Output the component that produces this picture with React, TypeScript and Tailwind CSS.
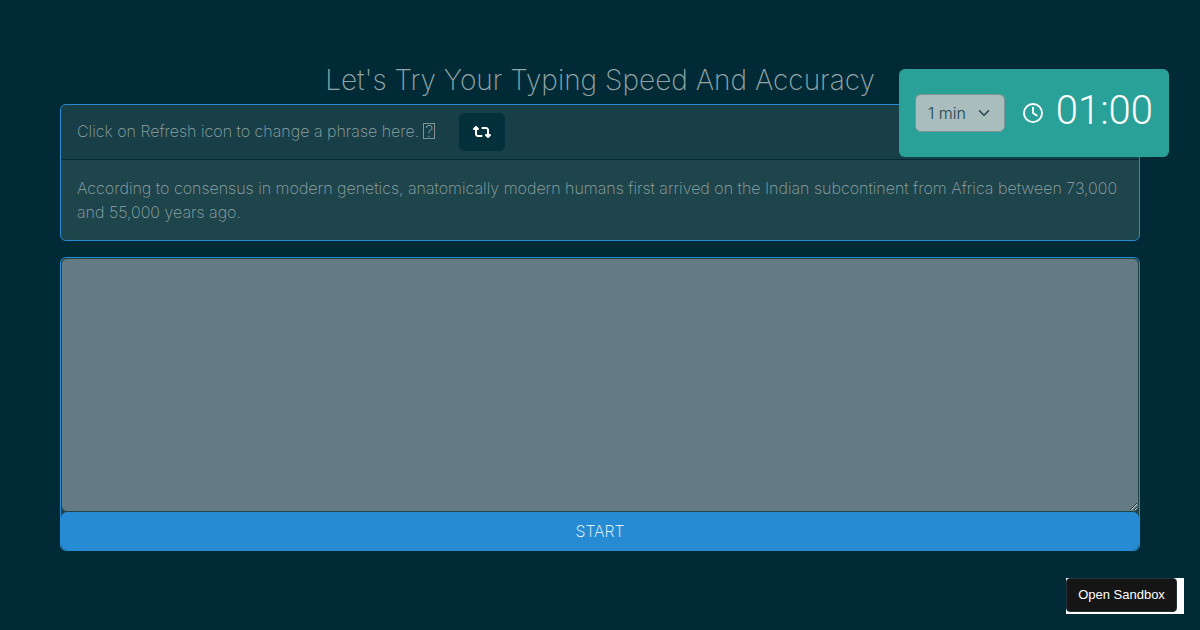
import { useEffect, useState } from 'react';
import { FaRegClock, FaRetweet } from 'react-icons/fa6';

const phrases = [
  'According to consensus in modern genetics, anatomically modern humans first arrived on the Indian subcontinent from Africa between 73,000 and 55,000 years ago.',
  'A journey of a thousand miles begins with a single step, and every careful step along the way teaches the traveller something new.',
];

const formatTime = (seconds: number) => {
  const mins = Math.floor(seconds / 60).toString().padStart(2, '0');
  const secs = (seconds % 60).toString().padStart(2, '0');
  return `${mins}:${secs}`;
};

interface TimerProps {
  minutes: number;
  seconds: number;
  onChange: (minutes: number) => void;
}

function Timer({ minutes, seconds, onChange }: TimerProps) {
  return (
    <div className="fixed top-[69px] right-[31px] z-10 flex h-[88px] w-[270px] items-center rounded-md bg-[#2aa198] px-4 text-white">
      <div className="relative">
        <select
          aria-label="Duration"
          value={minutes}
          onChange={(e) => onChange(Number(e.target.value))}
          className="h-[38px] w-[90px] appearance-none rounded-md border border-[#839496] bg-[#a9bdbd] pr-8 pl-3 text-base font-light text-[#20444e]"
        >
          <option value={1}>1 min</option>
          <option value={2}>2 min</option>
          <option value={5}>5 min</option>
        </select>
        <svg
          viewBox="0 0 16 16"
          className="pointer-events-none absolute top-[13px] right-[15px] h-3 w-3"
          fill="none"
          stroke="#20444e"
          strokeWidth="2"
          strokeLinecap="round"
          strokeLinejoin="round"
        >
          <path d="m2 5 6 6 6-6" />
        </svg>
      </div>
      <FaRegClock className="ml-[18px] h-5 w-5" />
      <span className="flex-1 pb-1 text-right font-['Roboto',sans-serif] text-[40px] leading-[48px] font-light">
        {formatTime(seconds)}
      </span>
    </div>
  );
}

export default function App() {
  const [index, setIndex] = useState(0);
  const [minutes, setMinutes] = useState(1);
  const [seconds, setSeconds] = useState(60);
  const [running, setRunning] = useState(false);
  const [text, setText] = useState('');

  useEffect(() => {
    if (!running) return;
    const interval = setInterval(() => {
      setSeconds((prev) => Math.max(prev - 1, 0));
    }, 1000);
    return () => clearInterval(interval);
  }, [running]);

  const changeMinutes = (value: number) => {
    setMinutes(value);
    setSeconds(value * 60);
    setRunning(false);
  };

  return (
    <div className="min-h-screen bg-[#002b36] font-['Inter','Liberation_Sans',sans-serif] text-base leading-6 font-extralight text-[#93a4a6]">
      <Timer minutes={minutes} seconds={seconds} onChange={changeMinutes} />

      <main className="px-[60px] pt-16">
        <h1 className="pb-2 text-center text-[28px] leading-8 font-extralight">
          Let's Try Your Typing Speed And Accuracy
        </h1>

        <section className="rounded-md border border-[#268bd2] bg-[#1e444c]">
          <div className="flex items-start rounded-t-md border-b border-[#002b36] bg-[#183f48] px-4 py-2">
            <span className="pt-[6px]">Click on Refresh icon to change a phrase here.</span>
            <span className="mt-[10px] ml-1 flex h-4 w-3 items-center justify-center border border-[#839496]">?</span>
            <button
              type="button"
              aria-label="Refresh phrase"
              onClick={() => setIndex((index + 1) % phrases.length)}
              className="ml-6 flex h-[38px] w-[46px] items-center justify-center rounded-md bg-[#04303b] text-white"
            >
              <FaRetweet className="h-4 w-[18px]" />
            </button>
          </div>
          <p className="p-4">{phrases[index]}</p>
        </section>

        <section className="mt-4 rounded-md border border-[#268bd2] bg-[#1e444c]">
          <textarea
            aria-label="Typing area"
            value={text}
            onChange={(e) => setText(e.target.value)}
            className="block h-[254px] w-full rounded-md border border-[#1e444c] bg-[#657b83] px-3 py-2 text-white outline-none"
          />
          <button
            type="button"
            onClick={() => setRunning(true)}
            className="block h-[38px] w-full rounded-md bg-[#268bd2] text-white"
          >
            START
          </button>
        </section>
      </main>

      <div className="fixed right-4 bottom-4 h-9 w-[118px] bg-white">
        <button
          type="button"
          className="h-[34px] w-[111px] rounded-sm border border-[#20343a] bg-[#151515] font-['Liberation_Sans',sans-serif] text-[13px] font-normal text-white"
        >
          Open Sandbox
        </button>
      </div>
    </div>
  );
}
